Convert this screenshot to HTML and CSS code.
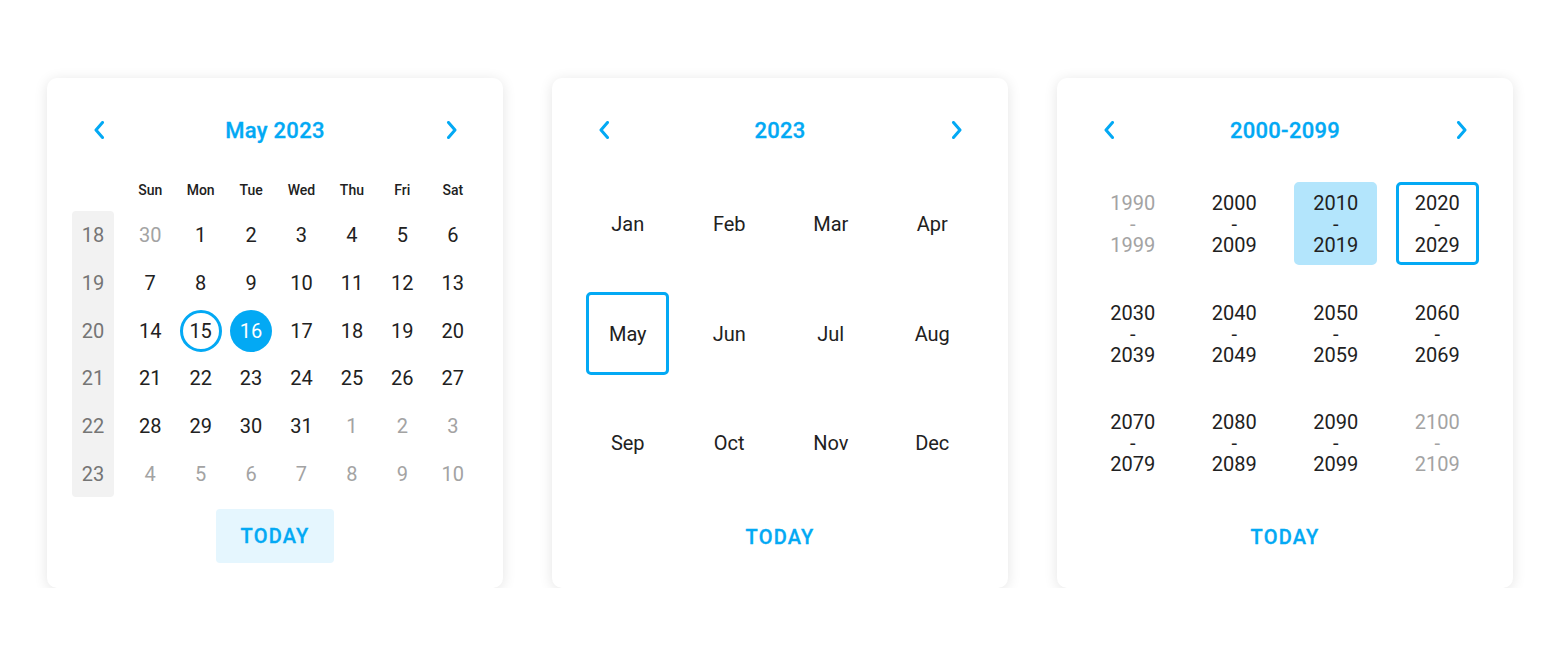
FILE: index.html
```html
<!DOCTYPE html>
<html>
<head>
<meta charset="utf-8">
<link rel="stylesheet" href="styles.css">
</head>
<body>
<div class="page">
  <div class="card">
    <div class="header">
      <button class="nav"><svg width="12" height="18" viewBox="0 0 12 18"><path d="M9.5 1.5 L3 9 L9.5 16.5" fill="none" stroke="#03a9f4" stroke-width="3" stroke-linecap="round" stroke-linejoin="round"/></svg></button>
      <div class="title">May 2023</div>
      <button class="nav"><svg width="12" height="18" viewBox="0 0 12 18"><path d="M2.5 1.5 L9 9 L2.5 16.5" fill="none" stroke="#03a9f4" stroke-width="3" stroke-linecap="round" stroke-linejoin="round"/></svg></button>
    </div>
    <div class="dow-row">
      <div class="week-spacer"></div>
      <div class="dow"><span>Sun</span><span>Mon</span><span>Tue</span><span>Wed</span><span>Thu</span><span>Fri</span><span>Sat</span></div>
    </div>
    <div class="month-body">
      <div class="weeks"><span>18</span><span>19</span><span>20</span><span>21</span><span>22</span><span>23</span></div>
      <div class="days">
        <span class="muted">30</span><span>1</span><span>2</span><span>3</span><span>4</span><span>5</span><span>6</span>
        <span>7</span><span>8</span><span>9</span><span>10</span><span>11</span><span>12</span><span>13</span>
        <span>14</span><span><i class="today-ring">15</i></span><span><i class="selected">16</i></span><span>17</span><span>18</span><span>19</span><span>20</span>
        <span>21</span><span>22</span><span>23</span><span>24</span><span>25</span><span>26</span><span>27</span>
        <span>28</span><span>29</span><span>30</span><span>31</span><span class="muted">1</span><span class="muted">2</span><span class="muted">3</span>
        <span class="muted">4</span><span class="muted">5</span><span class="muted">6</span><span class="muted">7</span><span class="muted">8</span><span class="muted">9</span><span class="muted">10</span>
      </div>
    </div>
    <div class="footer"><button class="today-btn filled">TODAY</button></div>
  </div>

  <div class="card">
    <div class="header">
      <button class="nav"><svg width="12" height="18" viewBox="0 0 12 18"><path d="M9.5 1.5 L3 9 L9.5 16.5" fill="none" stroke="#03a9f4" stroke-width="3" stroke-linecap="round" stroke-linejoin="round"/></svg></button>
      <div class="title">2023</div>
      <button class="nav"><svg width="12" height="18" viewBox="0 0 12 18"><path d="M2.5 1.5 L9 9 L2.5 16.5" fill="none" stroke="#03a9f4" stroke-width="3" stroke-linecap="round" stroke-linejoin="round"/></svg></button>
    </div>
    <div class="grid4">
      <div class="cell"><span class="box">Jan</span></div>
      <div class="cell"><span class="box">Feb</span></div>
      <div class="cell"><span class="box">Mar</span></div>
      <div class="cell"><span class="box">Apr</span></div>
      <div class="cell"><span class="box outlined">May</span></div>
      <div class="cell"><span class="box">Jun</span></div>
      <div class="cell"><span class="box">Jul</span></div>
      <div class="cell"><span class="box">Aug</span></div>
      <div class="cell"><span class="box">Sep</span></div>
      <div class="cell"><span class="box">Oct</span></div>
      <div class="cell"><span class="box">Nov</span></div>
      <div class="cell"><span class="box">Dec</span></div>
    </div>
    <div class="footer"><button class="today-btn">TODAY</button></div>
  </div>

  <div class="card">
    <div class="header">
      <button class="nav"><svg width="12" height="18" viewBox="0 0 12 18"><path d="M9.5 1.5 L3 9 L9.5 16.5" fill="none" stroke="#03a9f4" stroke-width="3" stroke-linecap="round" stroke-linejoin="round"/></svg></button>
      <div class="title">2000-2099</div>
      <button class="nav"><svg width="12" height="18" viewBox="0 0 12 18"><path d="M2.5 1.5 L9 9 L2.5 16.5" fill="none" stroke="#03a9f4" stroke-width="3" stroke-linecap="round" stroke-linejoin="round"/></svg></button>
    </div>
    <div class="grid4 decades">
      <div class="cell"><span class="box muted">1990<br>-<br>1999</span></div>
      <div class="cell"><span class="box">2000<br>-<br>2009</span></div>
      <div class="cell"><span class="box highlighted">2010<br>-<br>2019</span></div>
      <div class="cell"><span class="box outlined">2020<br>-<br>2029</span></div>
      <div class="cell"><span class="box">2030<br>-<br>2039</span></div>
      <div class="cell"><span class="box">2040<br>-<br>2049</span></div>
      <div class="cell"><span class="box">2050<br>-<br>2059</span></div>
      <div class="cell"><span class="box">2060<br>-<br>2069</span></div>
      <div class="cell"><span class="box">2070<br>-<br>2079</span></div>
      <div class="cell"><span class="box">2080<br>-<br>2089</span></div>
      <div class="cell"><span class="box">2090<br>-<br>2099</span></div>
      <div class="cell"><span class="box muted">2100<br>-<br>2109</span></div>
    </div>
    <div class="footer"><button class="today-btn">TODAY</button></div>
  </div>
</div>
</body>
</html>
```
FILE: styles.css
```css
* { box-sizing: border-box; }
html, body {
  margin: 0;
  padding: 0;
  background: #ffffff;
  font-family: Roboto, "Liberation Sans", sans-serif;
  color: #212121;
}
.page {
  display: flex;
  gap: 49px;
  padding: 78px 47px 0 47px;
}
.card {
  width: 456px;
  height: 510px;
  background: #fff;
  border-radius: 10px;
  box-shadow: 0 2px 14px rgba(0, 0, 0, 0.11);
  padding: 25px;
  display: flex;
  flex-direction: column;
}
.header {
  display: flex;
  align-items: center;
  height: 54px;
}
.nav {
  width: 53px;
  height: 54px;
  border: 0;
  background: transparent;
  padding: 0;
  display: flex;
  align-items: center;
  justify-content: center;
}
.title {
  flex: 1;
  text-align: center;
  color: #03a9f4;
  font-size: 22px;
  font-weight: 500;
  letter-spacing: 0.3px;
  -webkit-text-stroke: 0.3px #03a9f4;
}
.dow-row {
  display: flex;
  margin-top: 13px;
  height: 40px;
  align-items: center;
}
.week-spacer { width: 53px; }
.dow {
  flex: 1;
  display: grid;
  grid-template-columns: repeat(7, 1fr);
  text-align: center;
  font-size: 14px;
  font-weight: 500;
  color: #212121;
}
.month-body {
  display: flex;
  margin-top: 1px;
}
.weeks {
  width: 42px;
  margin-right: 11px;
  background: #f2f2f2;
  border-radius: 4px;
  display: flex;
  flex-direction: column;
}
.weeks span {
  height: 47.67px;
  padding-top: 1px;
  display: flex;
  align-items: center;
  justify-content: center;
  font-size: 20px;
  color: #757575;
}
.days {
  flex: 1;
  display: grid;
  grid-template-columns: repeat(7, 1fr);
  grid-auto-rows: 47.67px;
}
.days span {
  display: flex;
  align-items: center;
  justify-content: center;
  padding-top: 1px;
  font-size: 20px;
  color: #212121;
}
.days span.muted { color: #a3a3a3; }
.days i {
  font-style: normal;
  width: 42px;
  height: 42px;
  border-radius: 50%;
  display: flex;
  align-items: center;
  justify-content: center;
}
.today-ring { border: 3px solid #03a9f4; }
.selected { background: #03a9f4; color: #fff; }
.footer {
  display: flex;
  justify-content: center;
  margin-top: 12px;
}
.today-btn {
  width: 118px;
  height: 54px;
  border: 0;
  border-radius: 4px;
  background: transparent;
  color: #03a9f4;
  font-family: Roboto, "Liberation Sans", sans-serif;
  font-size: 20px;
  font-weight: 500;
  letter-spacing: 1.2px;
  -webkit-text-stroke: 0.3px #03a9f4;
  padding: 0;
}
.today-btn.filled { background: #e5f6fe; }
.grid4 {
  display: grid;
  grid-template-columns: repeat(4, 1fr);
  grid-auto-rows: 109.5px;
  margin-top: 12px;
}
.cell {
  display: flex;
  align-items: center;
  justify-content: center;
}
.box {
  width: 83px;
  height: 83px;
  display: flex;
  align-items: center;
  justify-content: center;
  text-align: center;
  font-size: 20px;
  line-height: 21px;
  padding-top: 2px;
  color: #212121;
  border-radius: 5px;
  border: 3px solid transparent;
}
.box.muted { color: #a3a3a3; }
.box.outlined { border-color: #03a9f4; }
.box.highlighted { background: #b3e5fc; border-color: #b3e5fc; }
```
